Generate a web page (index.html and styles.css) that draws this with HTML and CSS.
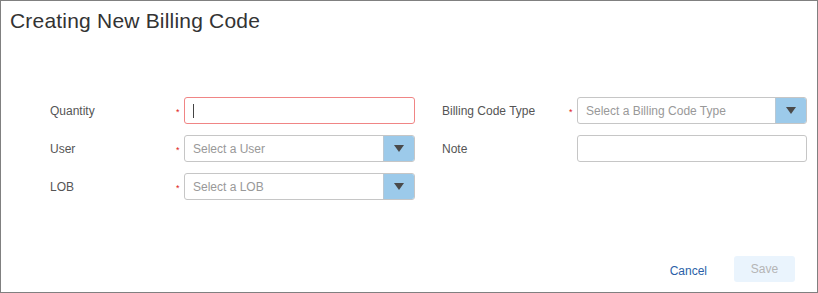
FILE: index.html
```html
<!DOCTYPE html>
<html>
<head>
<meta charset="utf-8">
<link rel="stylesheet" href="styles.css">
</head>
<body>
<div class="card">
  <h1 class="title">Creating New Billing Code</h1>
  <div class="form">
    <label class="label">Quantity</label>
    <span class="req">*</span>
    <div class="input invalid"><span class="caret"></span></div>
    <span></span>
    <label class="label">Billing Code Type</label>
    <span class="req">*</span>
    <div class="select"><span class="ph">Select a Billing Code Type</span><span class="btn"><span class="tri"></span></span></div>

    <label class="label">User</label>
    <span class="req">*</span>
    <div class="select"><span class="ph">Select a User</span><span class="btn"><span class="tri"></span></span></div>
    <span></span>
    <label class="label">Note</label>
    <span></span>
    <div class="input"></div>

    <label class="label">LOB</label>
    <span class="req">*</span>
    <div class="select"><span class="ph">Select a LOB</span><span class="btn"><span class="tri"></span></span></div>
  </div>
  <div class="footer">
    <span class="cancel">Cancel</span>
    <span class="save">Save</span>
  </div>
</div>
</body>
</html>
```
FILE: styles.css
```css
html, body {
  margin: 0;
  padding: 0;
  background: #fff;
}
body {
  font-family: "Liberation Sans", Arial, sans-serif;
  font-size: 12px;
  color: #555;
}
.card {
  width: 818px;
  height: 293px;
  box-sizing: border-box;
  border: 1px solid #808080;
  display: flex;
  flex-direction: column;
}
.title {
  margin: 8px 0 0 9px;
  font-size: 21px;
  letter-spacing: 0.2px;
  font-weight: normal;
  line-height: 24px;
  color: #333;
}
.form {
  margin-top: 64px;
  padding-left: 49px;
  display: grid;
  grid-template-columns: 120px 14px 231px 27px 121px 14px 230px;
  grid-auto-rows: 27px;
  row-gap: 11px;
  align-items: center;
}
.label {
  color: #555;
  font-size: 12px;
  padding-top: 1px;
}
.req {
  color: #e02020;
  font-size: 9px;
  line-height: 9px;
  padding-left: 6px;
  padding-top: 3px;
}
.input, .select {
  height: 27px;
  box-sizing: border-box;
  border: 1px solid #c6c6c6;
  border-radius: 3px;
  background: #fff;
  display: flex;
  align-items: center;
}
.input.invalid {
  border-color: #f08585;
}
.caret {
  width: 1px;
  height: 14px;
  background: #444;
  margin-left: 8px;
}
.select {
  overflow: hidden;
  justify-content: space-between;
}
.ph {
  color: #999;
  padding-left: 8px;
  font-size: 12px;
}
.btn {
  width: 30px;
  height: 100%;
  background: #9ccaea;
  border-left: 1px solid #b8c8d4;
  display: flex;
  align-items: center;
  justify-content: center;
}
.tri {
  width: 0;
  height: 0;
  border-left: 5px solid transparent;
  border-right: 5px solid transparent;
  border-top: 7px solid #4a4a4a;
}
.footer {
  margin-top: auto;
  margin-bottom: 10px;
  margin-right: 22px;
  display: flex;
  justify-content: flex-end;
  align-items: center;
  gap: 27px;
}
.cancel {
  color: #2b5fa8;
  font-size: 12px;
  padding-top: 4px;
}
.save {
  width: 61px;
  height: 26px;
  border-radius: 3px;
  background: #eaf4fd;
  color: #b5b5b5;
  display: flex;
  align-items: center;
  justify-content: center;
  font-size: 12px;
}
```
